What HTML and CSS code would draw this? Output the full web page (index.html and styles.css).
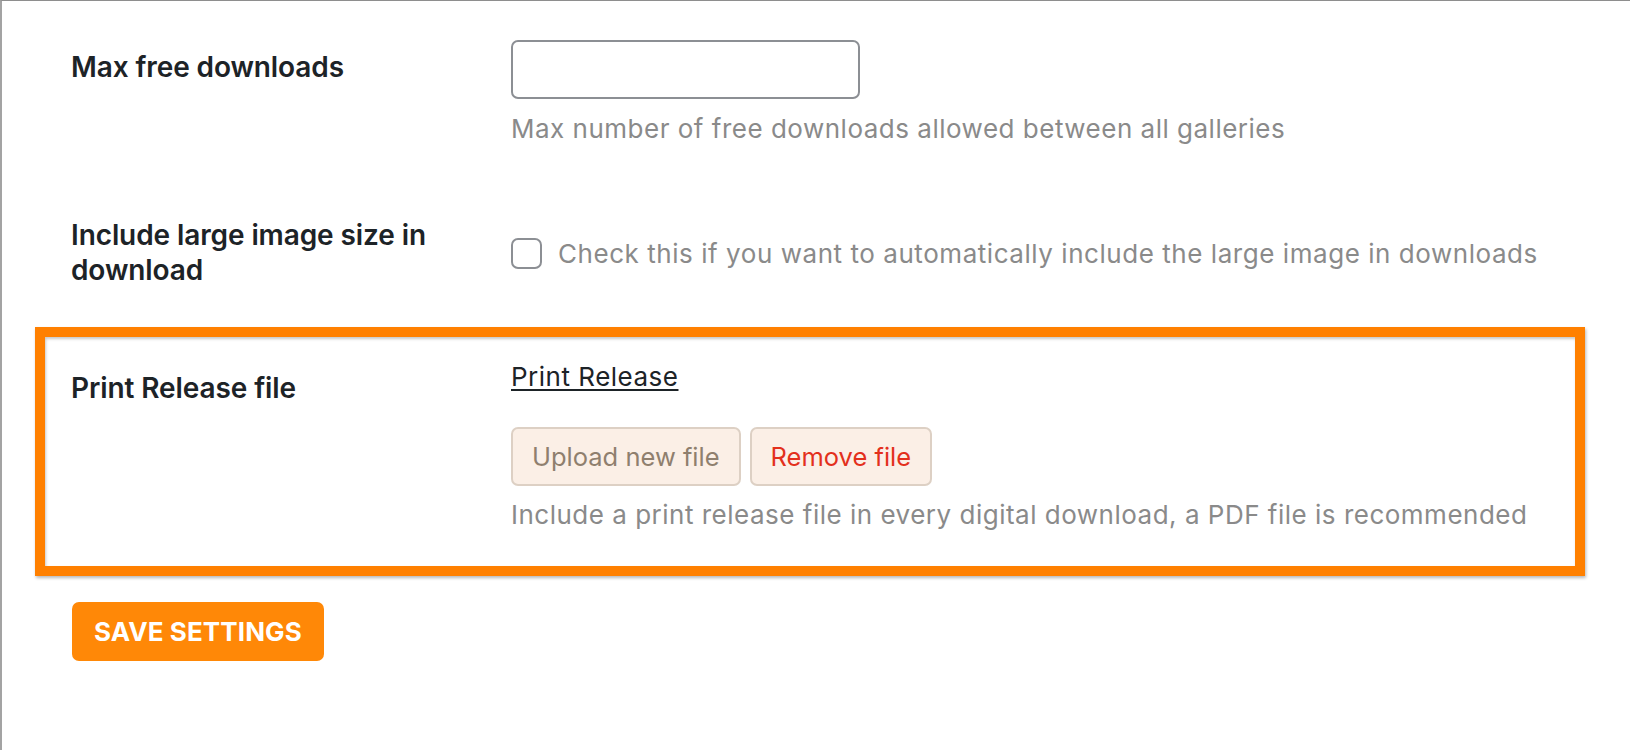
FILE: index.html
```html
<!DOCTYPE html>
<html lang="en">
<head>
<meta charset="utf-8">
<title>Settings</title>
<link rel="stylesheet" href="styles.css">
</head>
<body>
<div class="page">
  <div class="settings">
    <div class="row">
      <div class="label">Max free downloads</div>
      <div class="field">
        <input class="text-input" type="text">
        <p class="description">Max number of free downloads allowed between all galleries</p>
      </div>
    </div>
    <div class="row">
      <div class="label">Include large image size in download</div>
      <div class="field field-center">
        <label class="check-line"><span class="checkbox"></span><span class="description">Check this if you want to automatically include the large image in downloads</span></label>
      </div>
    </div>
    <div class="row highlight">
      <div class="label">Print Release file</div>
      <div class="field">
        <a class="file-link" href="#">Print Release</a>
        <div class="buttons">
          <button class="btn btn-upload" type="button">Upload new file</button>
          <button class="btn btn-remove" type="button">Remove file</button>
        </div>
        <p class="description desc-tight">Include a print release file in every digital download, a PDF file is recommended</p>
      </div>
    </div>
  </div>
  <div class="actions">
    <button class="save" type="button">SAVE SETTINGS</button>
  </div>
</div>
</body>
</html>
```

FILE: styles.css
```css
* { box-sizing: border-box; }
html, body {
  margin: 0;
  padding: 0;
  background: #ffffff;
}
body {
  font-family: Inter, "Noto Sans", "Liberation Sans", sans-serif;
  color: #1d2327;
}
.page {
  width: 1630px;
  height: 750px;
  border-top: 1px solid #8e8e8e;
  border-left: 2px solid #a3a3a3;
  padding: 9px 45px 0 33px;
}
.row {
  display: grid;
  grid-template-columns: 440px 1fr;
  padding-left: 36px;
}
.label {
  font-size: 28px;
  font-weight: 600;
  line-height: 34.5px;
  padding: 40px 20px 40px 0;
  letter-spacing: -0.1px;
}
.field {
  padding: 30px 0;
}
.field-center {
  align-self: center;
  padding-top: 32px;
}
.text-input {
  display: block;
  width: 349px;
  height: 59px;
  border: 2px solid #8c8f94;
  border-radius: 7px;
  background: #fff;
  margin: 0;
  font-family: inherit;
  font-size: 26px;
}
.description {
  margin: 10px 0 0;
  font-size: 26px;
  line-height: 39px;
  letter-spacing: 0.5px;
  color: #8a8a8a;
}
.check-line {
  display: flex;
  align-items: center;
  gap: 16px;
}
.check-line .description {
  margin: 0;
  letter-spacing: 0.55px;
}
.checkbox {
  flex: none;
  width: 31px;
  height: 31px;
  border: 2px solid #8c8f94;
  border-radius: 7px;
  background: #fff;
}
.highlight {
  border: 10px solid #ff8000;
  padding-left: 26px;
  box-shadow: 1px 2px 3px rgba(0, 0, 0, 0.28), inset 1px 2px 3px rgba(0, 0, 0, 0.22);
}
.highlight .label {
  padding-top: 34px;
}
.highlight .field {
  padding: 20px 0 32px;
}
.file-link {
  display: inline-block;
  font-size: 26px;
  line-height: 39px;
  letter-spacing: 0.5px;
  color: #1d2327;
  text-decoration: underline;
  text-underline-offset: 3px;
  text-decoration-thickness: 2px;
}
.buttons {
  display: flex;
  gap: 9px;
  margin-top: 31px;
}
.btn {
  height: 59px;
  padding: 0 19px;
  font-family: inherit;
  font-size: 25.5px;
  background: #fbefe6;
  border: 2px solid #ddd0c4;
  border-radius: 7px;
}
.btn-upload { color: #8f7f6e; }
.btn-remove { color: #e3301c; }
.desc-tight {
  margin-top: 9px;
}
.actions {
  padding: 26px 0 0 37px;
}
.save {
  height: 59px;
  padding: 0 22px;
  border: none;
  border-radius: 7px;
  background: #ff8807;
  color: #ffffff;
  font-family: inherit;
  font-size: 26px;
  font-weight: 700;
  letter-spacing: 0.1px;
}
```
